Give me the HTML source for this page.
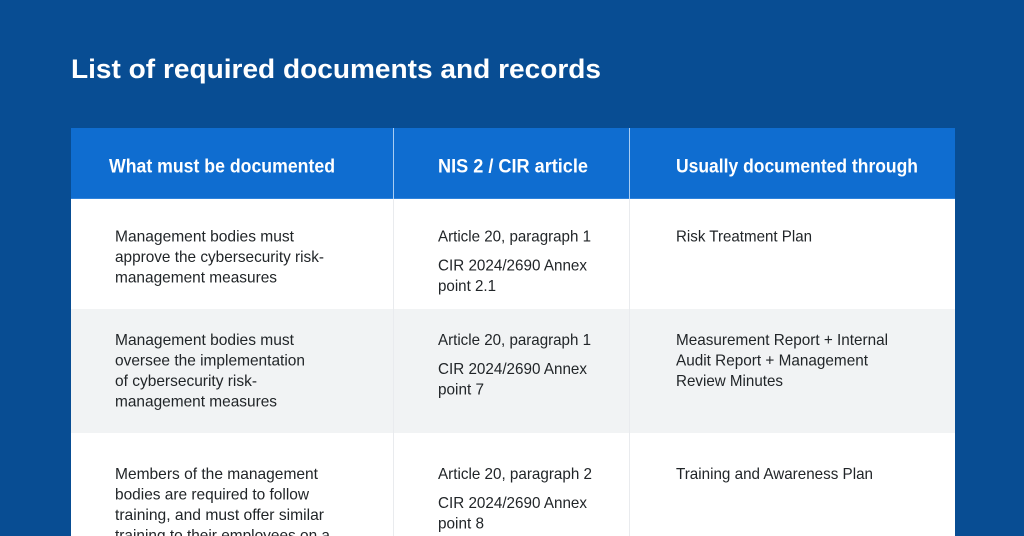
<!DOCTYPE html>
<html lang="en">
<head>
<meta charset="utf-8">
<title>List of required documents and records</title>
<style>
html,body{margin:0;padding:0;width:1024px;height:536px;overflow:hidden;background:#084d93}
svg{display:block}
text{font-family:"Liberation Sans",sans-serif}
.b text{font-size:15.8px;fill:#212528}
.h text{font-size:19px;font-weight:700;fill:#fff}
</style>
</head>
<body>
<svg width="1024" height="536" viewBox="0 0 1024 536" xmlns="http://www.w3.org/2000/svg">
<rect width="1024" height="536" fill="#084d93"/>
<text x="71" y="78" font-size="26.5" font-weight="700" fill="#fff" textLength="530" lengthAdjust="spacingAndGlyphs">List of required documents and records</text>
<rect x="71" y="128" width="884" height="71" fill="#0f6dd0"/>
<rect x="71" y="198" width="884" height="1" fill="#2f83db"/>
<rect x="71" y="199" width="884" height="337" fill="#fff"/>
<rect x="71" y="309" width="884" height="124" fill="#f1f3f4"/>
<rect x="393" y="128" width="1" height="71" fill="#a9cdf2"/>
<rect x="629" y="128" width="1" height="71" fill="#a9cdf2"/>
<rect x="393" y="199" width="1" height="337" fill="#e9ebee"/>
<rect x="629" y="199" width="1" height="337" fill="#e9ebee"/>
<g class="h">
<text x="109" y="172.5" textLength="226" lengthAdjust="spacingAndGlyphs">What must be documented</text>
<text x="438" y="172.5" textLength="150" lengthAdjust="spacingAndGlyphs">NIS 2 / CIR article</text>
<text x="676" y="172.5" textLength="242" lengthAdjust="spacingAndGlyphs">Usually documented through</text>
</g>
<g class="b">
<text x="115" y="241.5" textLength="179" lengthAdjust="spacingAndGlyphs">Management bodies must</text>
<text x="115" y="262" textLength="209" lengthAdjust="spacingAndGlyphs">approve the cybersecurity risk-</text>
<text x="115" y="282.5" textLength="162" lengthAdjust="spacingAndGlyphs">management measures</text>
<text x="438" y="241.5" textLength="153" lengthAdjust="spacingAndGlyphs">Article 20, paragraph 1</text>
<text x="438" y="270.5" textLength="149" lengthAdjust="spacingAndGlyphs">CIR 2024/2690 Annex</text>
<text x="438" y="291" textLength="58" lengthAdjust="spacingAndGlyphs">point 2.1</text>
<text x="676" y="241.5" textLength="136" lengthAdjust="spacingAndGlyphs">Risk Treatment Plan</text>

<text x="115" y="345" textLength="179" lengthAdjust="spacingAndGlyphs">Management bodies must</text>
<text x="115" y="365.5" textLength="190" lengthAdjust="spacingAndGlyphs">oversee the implementation</text>
<text x="115" y="386" textLength="142" lengthAdjust="spacingAndGlyphs">of cybersecurity risk-</text>
<text x="115" y="406.5" textLength="162" lengthAdjust="spacingAndGlyphs">management measures</text>
<text x="438" y="345" textLength="153" lengthAdjust="spacingAndGlyphs">Article 20, paragraph 1</text>
<text x="438" y="374" textLength="149" lengthAdjust="spacingAndGlyphs">CIR 2024/2690 Annex</text>
<text x="438" y="394.5" textLength="46" lengthAdjust="spacingAndGlyphs">point 7</text>
<text x="676" y="345" textLength="212" lengthAdjust="spacingAndGlyphs">Measurement Report + Internal</text>
<text x="676" y="365.5" textLength="192" lengthAdjust="spacingAndGlyphs">Audit Report + Management</text>
<text x="676" y="386" textLength="107" lengthAdjust="spacingAndGlyphs">Review Minutes</text>

<text x="115" y="479" textLength="203" lengthAdjust="spacingAndGlyphs">Members of the management</text>
<text x="115" y="499.5" textLength="194" lengthAdjust="spacingAndGlyphs">bodies are required to follow</text>
<text x="115" y="520" textLength="209" lengthAdjust="spacingAndGlyphs">training, and must offer similar</text>
<text x="115" y="540.5" textLength="215" lengthAdjust="spacingAndGlyphs">training to their employees on a</text>
<text x="438" y="479" textLength="154" lengthAdjust="spacingAndGlyphs">Article 20, paragraph 2</text>
<text x="438" y="508" textLength="149" lengthAdjust="spacingAndGlyphs">CIR 2024/2690 Annex</text>
<text x="438" y="528.5" textLength="46" lengthAdjust="spacingAndGlyphs">point 8</text>
<text x="676" y="479" textLength="197" lengthAdjust="spacingAndGlyphs">Training and Awareness Plan</text>
</g>
</svg>
</body>
</html>
